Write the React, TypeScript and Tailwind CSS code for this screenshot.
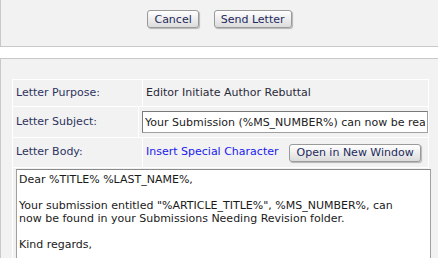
import React from 'react';

const btn =
  'h-[18px] px-[6px] rounded-[3px] border border-[#9a9a9a] bg-gradient-to-b from-white to-[#dcdcdc] text-[#1d2a5c] leading-none shadow-[1px_1px_1px_rgba(0,0,0,0.25)]';

export default function App() {
  const body = `Dear %TITLE% %LAST_NAME%,

Your submission entitled "%ARTICLE_TITLE%", %MS_NUMBER%, can now be found in your Submissions Needing Revision folder.

Kind regards,`;

  return (
    <div className="w-[438px] h-[258px] overflow-hidden bg-white text-[11px] font-['DejaVu_Sans',Verdana,sans-serif]">
      <div className="h-[47px] bg-[#f2f2f2] border-l border-b border-[#c8c8c8] flex justify-center gap-[15px] pt-[10px]">
        <button className={btn}>Cancel</button>
        <button className={btn}>Send Letter</button>
      </div>

      <div className="mt-[11px] h-[200px] bg-[#f2f2f2] border-l border-t border-[#c8c8c8] pt-[20px] pl-[11px]">
        <div className="w-[417px] bg-white p-px flex flex-col gap-px">
          <div className="flex gap-px h-[26px]">
            <div className="w-[129px] bg-[#f2f2f2] pl-[3px] flex items-center text-[#2e3461]">Letter Purpose:</div>
            <div className="flex-1 bg-[#f2f2f2] pl-[3px] flex items-center text-[#2a2a3a]">Editor Initiate Author Rebuttal</div>
          </div>
          <div className="flex gap-px h-[30px]">
            <div className="w-[129px] bg-[#f2f2f2] pl-[3px] flex items-center text-[#2e3461]">Letter Subject:</div>
            <div className="flex-1 bg-[#f2f2f2] pl-[3px] flex items-center">
              <input
                readOnly
                value="Your Submission (%MS_NUMBER%) can now be ready for revision"
                className="shrink-0 w-[286px] h-[22px] bg-white border border-[#a0a0a0] border-t-[#7a7a7a] border-l-[#7a7a7a] px-[2px] text-[11px] text-[#222] outline-none font-['DejaVu_Sans',Verdana,sans-serif]"
              />
            </div>
          </div>
          <div className="flex gap-px h-[29px]">
            <div className="w-[129px] bg-[#f2f2f2] pl-[3px] flex items-center text-[#2e3461]">Letter Body:</div>
            <div className="flex-1 bg-[#f2f2f2] pl-[3px] flex items-center gap-[11px]">
              <a className="text-[#1a1aee] cursor-pointer">Insert Special Character</a>
              <button className={btn}>Open in New Window</button>
            </div>
          </div>
          <div className="bg-[#f2f2f2] pl-[3px] pt-px h-[100px]">
            <textarea
              readOnly
              value={body}
              className="w-[415px] h-[110px] bg-white border border-[#a0a0a0] border-t-[#8a8a8a] pl-[2px] pr-[26px] pt-[3px] text-[11px] leading-[13px] text-[#1a1a1a] resize-none outline-none overflow-hidden font-['DejaVu_Sans',Verdana,sans-serif]"
            />
          </div>
        </div>
      </div>
    </div>
  );
}
